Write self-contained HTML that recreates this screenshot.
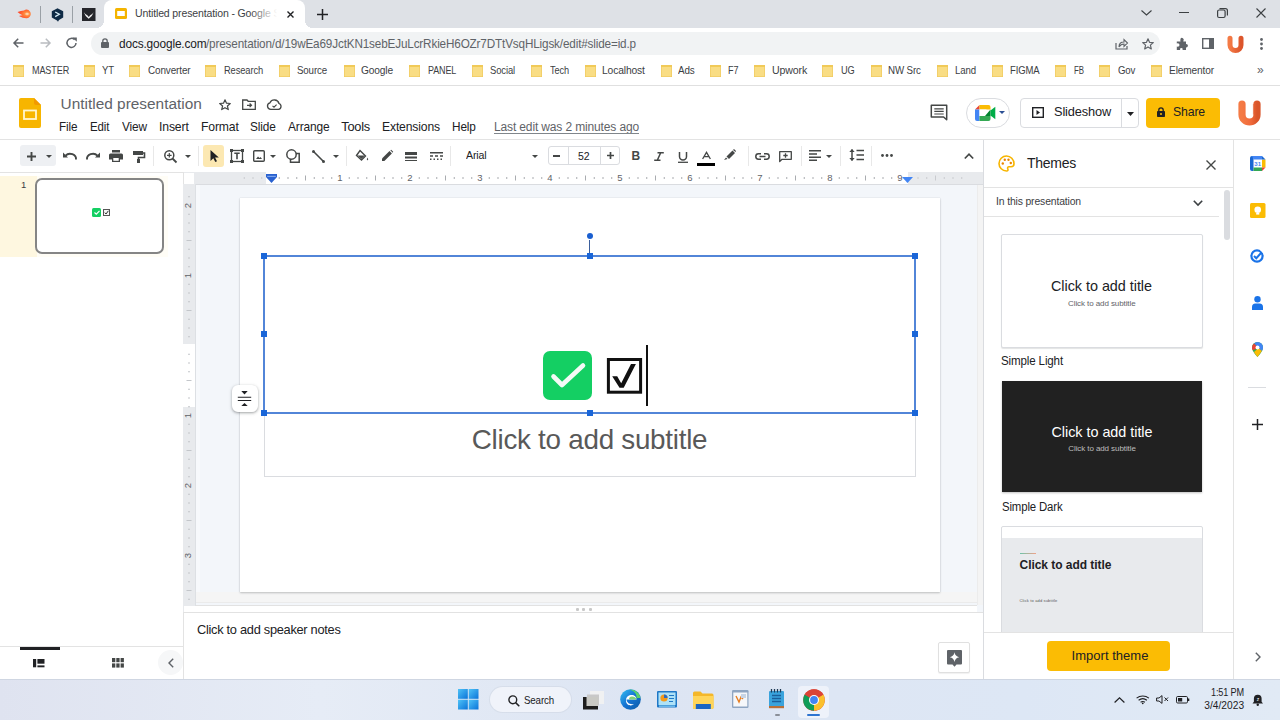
<!DOCTYPE html>
<html><head><meta charset="utf-8"><title>Google Slides</title>
<style>
*{box-sizing:border-box;margin:0;padding:0}
html,body{width:1280px;height:720px;overflow:hidden;background:#fff;font-family:"Liberation Sans",sans-serif;color:#202124;position:relative}
.a{position:absolute}
.t{white-space:pre}
svg{display:block;overflow:visible}
</style></head><body>
<div class="a" style="left:0px;top:0px;width:1280px;height:28px;background:#dee1e6"></div>
<svg class="a" style="left:16.5px;top:8.5px;" width="14" height="9.5" viewBox="0 0 14 9.5"><defs><radialGradient id="sr" cx="0.72" cy="0.5" r="0.6"><stop offset="0" stop-color="#fff3d6"/><stop offset="0.35" stop-color="#ff8a3d"/><stop offset="1" stop-color="#ff4a2a"/></radialGradient></defs><path d="M0.5 3 Q4 1.5 7 1.5 Q9 0 11.5 1 Q14 2.8 13.8 5 Q13.5 8.5 10 9.3 Q6 9.5 2 7 Q4 6.5 5.5 6.3 Q2.5 5 0.5 3 Z" fill="url(#sr)"/></svg>
<div class="a" style="left:39.5px;top:6px;width:1px;height:17px;background:#9aa0a6"></div>
<svg class="a" style="left:50.5px;top:7.5px;" width="13" height="14" viewBox="0 0 13 14"><path d="M6.5 0.3 L12.2 3.3 V9.5 L8 12 L7 13.7 L6 12.5 L0.8 9.5 V3.3 Z" fill="#0f2b46"/><path d="M4.2 4 L8.3 6.3 L4.2 8.6" stroke="#d8eef8" stroke-width="1.3" fill="none"/></svg>
<div class="a" style="left:72px;top:6px;width:1px;height:17px;background:#9aa0a6"></div>
<svg class="a" style="left:82px;top:7.8px;" width="13.5" height="13" viewBox="0 0 13.5 13"><rect width="13.5" height="13" fill="#25262b"/><path d="M1.8 4.2 Q3 8 6.7 10.8 Q10.5 8 11.7 4.2 Q9.8 6.8 8.2 7.2 L6.75 9 L5.3 7.2 Q3.7 6.8 1.8 4.2 Z" fill="#f2f2f2"/></svg>
<div class="a" style="left:104px;top:0;width:201px;height:28px;background:#fff;border-radius:8px 8px 0 0"></div>
<div class="a" style="left:96px;top:20px;width:8px;height:8px;background:radial-gradient(circle at 0 0,#dee1e6 8px,#fff 8px)"></div>
<div class="a" style="left:305px;top:20px;width:8px;height:8px;background:radial-gradient(circle at 8px 0,#dee1e6 8px,#fff 8px)"></div>
<svg class="a" style="left:114px;top:7px;" width="14" height="13" viewBox="0 0 14 13"><rect x="1" y="1" width="12" height="11" rx="1.5" fill="#f4b400"/><rect x="3.2" y="4" width="7.6" height="5" fill="#fff"/></svg>
<div class="a t" style="left:134.70px;top:8.15px;font-size:11.4px;line-height:11.4px;color:#3c4043;font-weight:400;letter-spacing:-0.150px;font-family:'Liberation Sans',sans-serif;transform:scaleX(0.9237);transform-origin:0 0;">Untitled presentation - Google S</div>
<div class="a" style="left:250px;top:5px;width:32px;height:18px;background:linear-gradient(90deg,rgba(255,255,255,0),#fff 85%)"></div>
<svg class="a" style="left:287px;top:11px;" width="7" height="7" viewBox="0 0 7 7"><path d="M0.5 0.5 L6.5 6.5 M6.5 0.5 L0.5 6.5" stroke="#202124" stroke-width="1.4"/></svg>
<svg class="a" style="left:317px;top:9px;" width="11" height="11" viewBox="0 0 11 11"><path d="M5.5 0 V11 M0 5.5 H11" stroke="#202124" stroke-width="1.5"/></svg>
<svg class="a" style="left:1141px;top:10px;" width="11" height="6" viewBox="0 0 11 6"><path d="M0.5 0.5 L5.5 5 L10.5 0.5" stroke="#3c4043" stroke-width="1.1" fill="none"/></svg>
<div class="a" style="left:1179px;top:12px;width:10px;height:1px;background:#3c4043"></div>
<svg class="a" style="left:1217px;top:8px;" width="11" height="10" viewBox="0 0 11 10"><rect x="0.6" y="2" width="7.5" height="7.5" rx="1.5" stroke="#3c4043" stroke-width="1.2" fill="none"/><path d="M2.5 0.6 H8.5 Q10.4 0.6 10.4 2.5 V7.5" stroke="#3c4043" stroke-width="1.2" fill="none"/></svg>
<svg class="a" style="left:1256px;top:8px;" width="10" height="10" viewBox="0 0 10 10"><path d="M0.5 0.5 L9.5 9.5 M9.5 0.5 L0.5 9.5" stroke="#3c4043" stroke-width="1.1"/></svg>
<div class="a" style="left:0px;top:28px;width:1280px;height:29px;background:#fff"></div>
<svg class="a" style="left:13px;top:38px;" width="11" height="10" viewBox="0 0 11 10"><path d="M10.5 5 H1.2 M5.2 0.8 L1 5 L5.2 9.2" stroke="#5f6368" stroke-width="1.5" fill="none"/></svg>
<svg class="a" style="left:40px;top:38px;" width="11" height="10" viewBox="0 0 11 10"><path d="M0.5 5 H9.8 M5.8 0.8 L10 5 L5.8 9.2" stroke="#b9bcc0" stroke-width="1.5" fill="none"/></svg>
<svg class="a" style="left:66px;top:37px;" width="12" height="12" viewBox="0 0 12 12"><path d="M10 6 A4.5 4.5 0 1 1 8.6 2.6" stroke="#5f6368" stroke-width="1.5" fill="none"/><path d="M6.5 0.5 H10.8 V4.8 Z" fill="#5f6368"/></svg>
<div class="a" style="left:91px;top:32px;width:1069px;height:23px;background:#f1f3f4;border-radius:12px"></div>
<svg class="a" style="left:101px;top:38px;" width="8" height="10" viewBox="0 0 8 10"><rect x="0" y="4" width="8" height="6" rx="1" fill="#5f6368"/><path d="M1.8 4.5 V3 A2.2 2.2 0 0 1 6.2 3 V4.5" stroke="#5f6368" stroke-width="1.3" fill="none"/></svg>
<div class="a t" style="left:118.75px;top:37.97px;font-size:12.2px;line-height:12.2px;color:#202124;font-weight:400;letter-spacing:-0.150px;font-family:'Liberation Sans',sans-serif;transform:scaleX(0.9734);transform-origin:0 0;">docs.google.com</div>
<div class="a t" style="left:206.30px;top:37.97px;font-size:12.2px;line-height:12.2px;color:#5f6368;font-weight:400;letter-spacing:-0.150px;font-family:'Liberation Sans',sans-serif;transform:scaleX(0.9607);transform-origin:0 0;">/presentation/d/19wEa69JctKN1sebEJuLcrRkieH6OZr7DTtVsqHLigsk/edit#slide=id.p</div>
<svg class="a" style="left:1115px;top:38px;" width="13" height="12" viewBox="0 0 13 12"><path d="M1 5 V11 H12 V8" stroke="#5f6368" stroke-width="1.2" fill="none"/><path d="M4 9 Q4 4 9 4 V1.5 L12.5 5 L9 8.5 V6 Q6 6 4 9" stroke="#5f6368" stroke-width="1.1" fill="none"/></svg>
<svg class="a" style="left:1142px;top:38px;" width="12" height="12" viewBox="0 0 12 12"><path d="M6 0.8 L7.5 4.3 L11.3 4.6 L8.4 7.1 L9.3 10.9 L6 8.9 L2.7 10.9 L3.6 7.1 L0.7 4.6 L4.5 4.3 Z" stroke="#5f6368" stroke-width="1.2" fill="none" stroke-linejoin="round"/></svg>
<svg class="a" style="left:1176px;top:38px;" width="12" height="12" viewBox="0 0 12 12"><path d="M4.5 0.8 A1.5 1.5 0 0 1 7.5 2.5 L7.3 3.5 H10 V6 L11 6.3 A1.6 1.6 0 0 1 11 9.2 L10 9.5 V12 H6.5 L6.7 10.8 A1.5 1.5 0 0 0 4 10.8 L4.2 12 H0.8 V8.5 L1.8 8.7 A1.6 1.6 0 0 0 1.8 5.3 L0.8 5.5 V3.5 H4.5 L4.3 2.5 Z" fill="#5f6368"/></svg>
<svg class="a" style="left:1202px;top:38px;" width="12" height="11" viewBox="0 0 12 11"><rect x="0.7" y="0.7" width="10.6" height="9.6" stroke="#5f6368" stroke-width="1.4" fill="none"/><rect x="7" y="0.7" width="4.3" height="9.6" fill="#5f6368"/></svg>
<svg class="a" style="left:1227px;top:34.5px;" width="17" height="18.5" viewBox="0 0 17 18.5"><defs><linearGradient id="ug2" x1="0" y1="0" x2="1" y2="0"><stop offset="0" stop-color="#f47a45"/><stop offset="1" stop-color="#dc552b"/></linearGradient></defs><path d="M3 3.2 V10 A5.5 5.5 0 0 0 14 10 V3.2" stroke="url(#ug2)" stroke-width="5" fill="none" stroke-linecap="round"/></svg>
<svg class="a" style="left:1260px;top:38px;" width="3" height="12" viewBox="0 0 3 12"><circle cx="1.5" cy="1.5" r="1.4" fill="#5f6368"/><circle cx="1.5" cy="6" r="1.4" fill="#5f6368"/><circle cx="1.5" cy="10.5" r="1.4" fill="#5f6368"/></svg>
<div class="a" style="left:0px;top:57px;width:1280px;height:28px;background:#fff"></div>
<div class="a" style="left:0px;top:85px;width:1280px;height:1px;background:#e0e0e0"></div>
<svg class="a" style="left:13px;top:64.5px;" width="11" height="12" viewBox="0 0 11 12"><rect x="0" y="0" width="11" height="12" fill="#f9dd84"/><rect x="0" y="0" width="11" height="2" fill="#f2cb57"/><rect x="0.3" y="0.3" width="10.4" height="11.4" fill="none" stroke="#efc95a" stroke-width="0.6"/></svg>
<div class="a t" style="left:31.80px;top:64.95px;font-size:11.4px;line-height:11.4px;color:#3c4043;font-weight:400;letter-spacing:-0.150px;font-family:'Liberation Sans',sans-serif;transform:scaleX(0.7967);transform-origin:0 0;">MASTER</div>
<svg class="a" style="left:84px;top:64.5px;" width="11" height="12" viewBox="0 0 11 12"><rect x="0" y="0" width="11" height="12" fill="#f9dd84"/><rect x="0" y="0" width="11" height="2" fill="#f2cb57"/><rect x="0.3" y="0.3" width="10.4" height="11.4" fill="none" stroke="#efc95a" stroke-width="0.6"/></svg>
<div class="a t" style="left:102.00px;top:64.95px;font-size:11.4px;line-height:11.4px;color:#3c4043;font-weight:400;letter-spacing:-0.150px;font-family:'Liberation Sans',sans-serif;transform:scaleX(0.8414);transform-origin:0 0;">YT</div>
<svg class="a" style="left:129px;top:64.5px;" width="11" height="12" viewBox="0 0 11 12"><rect x="0" y="0" width="11" height="12" fill="#f9dd84"/><rect x="0" y="0" width="11" height="2" fill="#f2cb57"/><rect x="0.3" y="0.3" width="10.4" height="11.4" fill="none" stroke="#efc95a" stroke-width="0.6"/></svg>
<div class="a t" style="left:147.50px;top:64.95px;font-size:11.4px;line-height:11.4px;color:#3c4043;font-weight:400;letter-spacing:-0.150px;font-family:'Liberation Sans',sans-serif;transform:scaleX(0.8733);transform-origin:0 0;">Converter</div>
<svg class="a" style="left:205px;top:64.5px;" width="11" height="12" viewBox="0 0 11 12"><rect x="0" y="0" width="11" height="12" fill="#f9dd84"/><rect x="0" y="0" width="11" height="2" fill="#f2cb57"/><rect x="0.3" y="0.3" width="10.4" height="11.4" fill="none" stroke="#efc95a" stroke-width="0.6"/></svg>
<div class="a t" style="left:224.00px;top:64.95px;font-size:11.4px;line-height:11.4px;color:#3c4043;font-weight:400;letter-spacing:-0.150px;font-family:'Liberation Sans',sans-serif;transform:scaleX(0.8202);transform-origin:0 0;">Research</div>
<svg class="a" style="left:279px;top:64.5px;" width="11" height="12" viewBox="0 0 11 12"><rect x="0" y="0" width="11" height="12" fill="#f9dd84"/><rect x="0" y="0" width="11" height="2" fill="#f2cb57"/><rect x="0.3" y="0.3" width="10.4" height="11.4" fill="none" stroke="#efc95a" stroke-width="0.6"/></svg>
<div class="a t" style="left:297.00px;top:64.95px;font-size:11.4px;line-height:11.4px;color:#3c4043;font-weight:400;letter-spacing:-0.150px;font-family:'Liberation Sans',sans-serif;transform:scaleX(0.8524);transform-origin:0 0;">Source</div>
<svg class="a" style="left:344px;top:64.5px;" width="11" height="12" viewBox="0 0 11 12"><rect x="0" y="0" width="11" height="12" fill="#f9dd84"/><rect x="0" y="0" width="11" height="2" fill="#f2cb57"/><rect x="0.3" y="0.3" width="10.4" height="11.4" fill="none" stroke="#efc95a" stroke-width="0.6"/></svg>
<div class="a t" style="left:361.00px;top:64.95px;font-size:11.4px;line-height:11.4px;color:#3c4043;font-weight:400;letter-spacing:-0.150px;font-family:'Liberation Sans',sans-serif;transform:scaleX(0.8930);transform-origin:0 0;">Google</div>
<svg class="a" style="left:409px;top:64.5px;" width="11" height="12" viewBox="0 0 11 12"><rect x="0" y="0" width="11" height="12" fill="#f9dd84"/><rect x="0" y="0" width="11" height="2" fill="#f2cb57"/><rect x="0.3" y="0.3" width="10.4" height="11.4" fill="none" stroke="#efc95a" stroke-width="0.6"/></svg>
<div class="a t" style="left:427.50px;top:64.95px;font-size:11.4px;line-height:11.4px;color:#3c4043;font-weight:400;letter-spacing:-0.150px;font-family:'Liberation Sans',sans-serif;transform:scaleX(0.7885);transform-origin:0 0;">PANEL</div>
<svg class="a" style="left:472px;top:64.5px;" width="11" height="12" viewBox="0 0 11 12"><rect x="0" y="0" width="11" height="12" fill="#f9dd84"/><rect x="0" y="0" width="11" height="2" fill="#f2cb57"/><rect x="0.3" y="0.3" width="10.4" height="11.4" fill="none" stroke="#efc95a" stroke-width="0.6"/></svg>
<div class="a t" style="left:490.00px;top:64.95px;font-size:11.4px;line-height:11.4px;color:#3c4043;font-weight:400;letter-spacing:-0.150px;font-family:'Liberation Sans',sans-serif;transform:scaleX(0.8297);transform-origin:0 0;">Social</div>
<svg class="a" style="left:531px;top:64.5px;" width="11" height="12" viewBox="0 0 11 12"><rect x="0" y="0" width="11" height="12" fill="#f9dd84"/><rect x="0" y="0" width="11" height="2" fill="#f2cb57"/><rect x="0.3" y="0.3" width="10.4" height="11.4" fill="none" stroke="#efc95a" stroke-width="0.6"/></svg>
<div class="a t" style="left:549.50px;top:64.95px;font-size:11.4px;line-height:11.4px;color:#3c4043;font-weight:400;letter-spacing:-0.150px;font-family:'Liberation Sans',sans-serif;transform:scaleX(0.8055);transform-origin:0 0;">Tech</div>
<svg class="a" style="left:585px;top:64.5px;" width="11" height="12" viewBox="0 0 11 12"><rect x="0" y="0" width="11" height="12" fill="#f9dd84"/><rect x="0" y="0" width="11" height="2" fill="#f2cb57"/><rect x="0.3" y="0.3" width="10.4" height="11.4" fill="none" stroke="#efc95a" stroke-width="0.6"/></svg>
<div class="a t" style="left:602.00px;top:64.95px;font-size:11.4px;line-height:11.4px;color:#3c4043;font-weight:400;letter-spacing:-0.150px;font-family:'Liberation Sans',sans-serif;transform:scaleX(0.9027);transform-origin:0 0;">Localhost</div>
<svg class="a" style="left:661px;top:64.5px;" width="11" height="12" viewBox="0 0 11 12"><rect x="0" y="0" width="11" height="12" fill="#f9dd84"/><rect x="0" y="0" width="11" height="2" fill="#f2cb57"/><rect x="0.3" y="0.3" width="10.4" height="11.4" fill="none" stroke="#efc95a" stroke-width="0.6"/></svg>
<div class="a t" style="left:678.40px;top:64.95px;font-size:11.4px;line-height:11.4px;color:#3c4043;font-weight:400;letter-spacing:-0.150px;font-family:'Liberation Sans',sans-serif;transform:scaleX(0.8650);transform-origin:0 0;">Ads</div>
<svg class="a" style="left:710px;top:64.5px;" width="11" height="12" viewBox="0 0 11 12"><rect x="0" y="0" width="11" height="12" fill="#f9dd84"/><rect x="0" y="0" width="11" height="2" fill="#f2cb57"/><rect x="0.3" y="0.3" width="10.4" height="11.4" fill="none" stroke="#efc95a" stroke-width="0.6"/></svg>
<div class="a t" style="left:728.30px;top:64.95px;font-size:11.4px;line-height:11.4px;color:#3c4043;font-weight:400;letter-spacing:-0.150px;font-family:'Liberation Sans',sans-serif;transform:scaleX(0.7925);transform-origin:0 0;">F7</div>
<svg class="a" style="left:754px;top:64.5px;" width="11" height="12" viewBox="0 0 11 12"><rect x="0" y="0" width="11" height="12" fill="#f9dd84"/><rect x="0" y="0" width="11" height="2" fill="#f2cb57"/><rect x="0.3" y="0.3" width="10.4" height="11.4" fill="none" stroke="#efc95a" stroke-width="0.6"/></svg>
<div class="a t" style="left:772.30px;top:64.95px;font-size:11.4px;line-height:11.4px;color:#3c4043;font-weight:400;letter-spacing:-0.150px;font-family:'Liberation Sans',sans-serif;transform:scaleX(0.9304);transform-origin:0 0;">Upwork</div>
<svg class="a" style="left:822px;top:64.5px;" width="11" height="12" viewBox="0 0 11 12"><rect x="0" y="0" width="11" height="12" fill="#f9dd84"/><rect x="0" y="0" width="11" height="2" fill="#f2cb57"/><rect x="0.3" y="0.3" width="10.4" height="11.4" fill="none" stroke="#efc95a" stroke-width="0.6"/></svg>
<div class="a t" style="left:841.20px;top:64.95px;font-size:11.4px;line-height:11.4px;color:#3c4043;font-weight:400;letter-spacing:-0.150px;font-family:'Liberation Sans',sans-serif;transform:scaleX(0.8098);transform-origin:0 0;">UG</div>
<svg class="a" style="left:871px;top:64.5px;" width="11" height="12" viewBox="0 0 11 12"><rect x="0" y="0" width="11" height="12" fill="#f9dd84"/><rect x="0" y="0" width="11" height="2" fill="#f2cb57"/><rect x="0.3" y="0.3" width="10.4" height="11.4" fill="none" stroke="#efc95a" stroke-width="0.6"/></svg>
<div class="a t" style="left:888.20px;top:64.95px;font-size:11.4px;line-height:11.4px;color:#3c4043;font-weight:400;letter-spacing:-0.150px;font-family:'Liberation Sans',sans-serif;transform:scaleX(0.8556);transform-origin:0 0;">NW Src</div>
<svg class="a" style="left:937px;top:64.5px;" width="11" height="12" viewBox="0 0 11 12"><rect x="0" y="0" width="11" height="12" fill="#f9dd84"/><rect x="0" y="0" width="11" height="2" fill="#f2cb57"/><rect x="0.3" y="0.3" width="10.4" height="11.4" fill="none" stroke="#efc95a" stroke-width="0.6"/></svg>
<div class="a t" style="left:955.00px;top:64.95px;font-size:11.4px;line-height:11.4px;color:#3c4043;font-weight:400;letter-spacing:-0.150px;font-family:'Liberation Sans',sans-serif;transform:scaleX(0.8487);transform-origin:0 0;">Land</div>
<svg class="a" style="left:992px;top:64.5px;" width="11" height="12" viewBox="0 0 11 12"><rect x="0" y="0" width="11" height="12" fill="#f9dd84"/><rect x="0" y="0" width="11" height="2" fill="#f2cb57"/><rect x="0.3" y="0.3" width="10.4" height="11.4" fill="none" stroke="#efc95a" stroke-width="0.6"/></svg>
<div class="a t" style="left:1010.00px;top:64.95px;font-size:11.4px;line-height:11.4px;color:#3c4043;font-weight:400;letter-spacing:-0.150px;font-family:'Liberation Sans',sans-serif;transform:scaleX(0.8350);transform-origin:0 0;">FIGMA</div>
<svg class="a" style="left:1055px;top:64.5px;" width="11" height="12" viewBox="0 0 11 12"><rect x="0" y="0" width="11" height="12" fill="#f9dd84"/><rect x="0" y="0" width="11" height="2" fill="#f2cb57"/><rect x="0.3" y="0.3" width="10.4" height="11.4" fill="none" stroke="#efc95a" stroke-width="0.6"/></svg>
<div class="a t" style="left:1073.70px;top:64.95px;font-size:11.4px;line-height:11.4px;color:#3c4043;font-weight:400;letter-spacing:-0.150px;font-family:'Liberation Sans',sans-serif;transform:scaleX(0.6941);transform-origin:0 0;">FB</div>
<svg class="a" style="left:1099px;top:64.5px;" width="11" height="12" viewBox="0 0 11 12"><rect x="0" y="0" width="11" height="12" fill="#f9dd84"/><rect x="0" y="0" width="11" height="2" fill="#f2cb57"/><rect x="0.3" y="0.3" width="10.4" height="11.4" fill="none" stroke="#efc95a" stroke-width="0.6"/></svg>
<div class="a t" style="left:1117.70px;top:64.95px;font-size:11.4px;line-height:11.4px;color:#3c4043;font-weight:400;letter-spacing:-0.150px;font-family:'Liberation Sans',sans-serif;transform:scaleX(0.8464);transform-origin:0 0;">Gov</div>
<svg class="a" style="left:1151px;top:64.5px;" width="11" height="12" viewBox="0 0 11 12"><rect x="0" y="0" width="11" height="12" fill="#f9dd84"/><rect x="0" y="0" width="11" height="2" fill="#f2cb57"/><rect x="0.3" y="0.3" width="10.4" height="11.4" fill="none" stroke="#efc95a" stroke-width="0.6"/></svg>
<div class="a t" style="left:1169.00px;top:64.95px;font-size:11.4px;line-height:11.4px;color:#3c4043;font-weight:400;letter-spacing:-0.150px;font-family:'Liberation Sans',sans-serif;transform:scaleX(0.8898);transform-origin:0 0;">Elementor</div>
<div class="a t" style="left:1257.00px;top:64.34px;font-size:12px;line-height:12px;color:#5f6368;font-weight:400;letter-spacing:0.000px;font-family:'Liberation Sans',sans-serif;">»</div>
<div class="a" style="left:0px;top:86px;width:1280px;height:53px;background:#fff"></div>
<svg class="a" style="left:19px;top:98px;" width="22" height="30" viewBox="0 0 22 30"><path d="M2 0 H15 L22 7 V28 A2 2 0 0 1 20 30 H2 A2 2 0 0 1 0 28 V2 A2 2 0 0 1 2 0 Z" fill="#f7b500"/><path d="M15 0 L22 7 H17 A2 2 0 0 1 15 5 Z" fill="#f29900"/><rect x="5" y="12.5" width="12" height="8.5" fill="none" stroke="#fff6d0" stroke-width="1.8"/></svg>
<div class="a t" style="left:60.50px;top:96.46px;font-size:15.4px;line-height:15.4px;color:#5f6368;font-weight:400;letter-spacing:0.011px;font-family:'Liberation Sans',sans-serif;">Untitled presentation</div>
<svg class="a" style="left:219px;top:99px;" width="12" height="11" viewBox="0 0 12 11"><path d="M6 0.8 L7.5 4.2 L11.3 4.5 L8.4 7 L9.3 10.6 L6 8.7 L2.7 10.6 L3.6 7 L0.7 4.5 L4.5 4.2 Z" stroke="#444746" stroke-width="1.2" fill="none" stroke-linejoin="round"/></svg>
<svg class="a" style="left:242px;top:99px;" width="14" height="11" viewBox="0 0 14 11"><path d="M0.7 1 H5 L6.2 2.3 H13.3 V10.3 H0.7 Z" stroke="#444746" stroke-width="1.3" fill="none"/><path d="M5 6.3 H9.5 M7.6 4.5 L9.5 6.3 L7.6 8.1" stroke="#444746" stroke-width="1.2" fill="none"/></svg>
<svg class="a" style="left:267px;top:99px;" width="15" height="11" viewBox="0 0 15 11"><path d="M3.8 10.3 H11.5 A3 3 0 0 0 12 4.5 A4.8 4.8 0 0 0 3 3.8 A3.3 3.3 0 0 0 3.8 10.3 Z" stroke="#444746" stroke-width="1.3" fill="none"/><path d="M5.5 6.8 L7 8.2 L9.6 5.6" stroke="#444746" stroke-width="1.1" fill="none"/></svg>
<div class="a t" style="left:59.40px;top:121.16px;font-size:12.8px;line-height:12.8px;color:#202124;font-weight:400;letter-spacing:-0.150px;font-family:'Liberation Sans',sans-serif;transform:scaleX(0.9139);transform-origin:0 0;">File</div>
<div class="a t" style="left:89.80px;top:121.16px;font-size:12.8px;line-height:12.8px;color:#202124;font-weight:400;letter-spacing:-0.150px;font-family:'Liberation Sans',sans-serif;transform:scaleX(0.8946);transform-origin:0 0;">Edit</div>
<div class="a t" style="left:121.50px;top:121.16px;font-size:12.8px;line-height:12.8px;color:#202124;font-weight:400;letter-spacing:-0.150px;font-family:'Liberation Sans',sans-serif;transform:scaleX(0.9288);transform-origin:0 0;">View</div>
<div class="a t" style="left:159.00px;top:121.16px;font-size:12.8px;line-height:12.8px;color:#202124;font-weight:400;letter-spacing:-0.150px;font-family:'Liberation Sans',sans-serif;transform:scaleX(0.9545);transform-origin:0 0;">Insert</div>
<div class="a t" style="left:201.00px;top:121.16px;font-size:12.8px;line-height:12.8px;color:#202124;font-weight:400;letter-spacing:-0.150px;font-family:'Liberation Sans',sans-serif;transform:scaleX(0.9513);transform-origin:0 0;">Format</div>
<div class="a t" style="left:250.40px;top:121.16px;font-size:12.8px;line-height:12.8px;color:#202124;font-weight:400;letter-spacing:-0.150px;font-family:'Liberation Sans',sans-serif;transform:scaleX(0.9236);transform-origin:0 0;">Slide</div>
<div class="a t" style="left:287.90px;top:121.16px;font-size:12.8px;line-height:12.8px;color:#202124;font-weight:400;letter-spacing:-0.150px;font-family:'Liberation Sans',sans-serif;transform:scaleX(0.9330);transform-origin:0 0;">Arrange</div>
<div class="a t" style="left:341.25px;top:121.16px;font-size:12.8px;line-height:12.8px;color:#202124;font-weight:400;letter-spacing:-0.225px;font-family:'Liberation Sans',sans-serif;">Tools</div>
<div class="a t" style="left:382.00px;top:121.16px;font-size:12.8px;line-height:12.8px;color:#202124;font-weight:400;letter-spacing:-0.150px;font-family:'Liberation Sans',sans-serif;transform:scaleX(0.9491);transform-origin:0 0;">Extensions</div>
<div class="a t" style="left:452.00px;top:121.16px;font-size:12.8px;line-height:12.8px;color:#202124;font-weight:400;letter-spacing:-0.150px;font-family:'Liberation Sans',sans-serif;transform:scaleX(0.9231);transform-origin:0 0;">Help</div>
<div class="a t" style="left:493.75px;top:121.42px;font-size:12.5px;line-height:12.5px;color:#5f6368;font-weight:400;letter-spacing:-0.150px;font-family:'Liberation Sans',sans-serif;transform:scaleX(0.9609);transform-origin:0 0;">Last edit was 2 minutes ago</div>
<div class="a" style="left:494px;top:132.5px;width:145px;height:1px;background:#80868b"></div>
<svg class="a" style="left:930px;top:103.5px;" width="18" height="17" viewBox="0 0 18 17"><path d="M1.3 1.3 H16.7 V15.8 L13.6 13 H1.3 Z" stroke="#444746" stroke-width="1.5" fill="none" stroke-linejoin="round"/><path d="M4.3 4.8 H13.7 M4.3 7.3 H13.7 M4.3 10 H13.7" stroke="#444746" stroke-width="1.2"/></svg>
<div class="a" style="left:966px;top:98px;width:44px;height:30px;border:1px solid #dadce0;border-radius:15px;background:#fff"></div>
<svg class="a" style="left:974.5px;top:104.5px;" width="21" height="16" viewBox="0 0 21 16"><path d="M0 4.5 L4.5 0 V4.5 Z" fill="#ea4335"/><path d="M4.5 0 H13.5 A2 2 0 0 1 15.5 2 V4.5 H4.5 Z" fill="#fbbc04"/><path d="M0 4.5 H4.5 V16 H2 A2 2 0 0 1 0 14 Z" fill="#4285f4"/><path d="M4.5 11 H15.5 V14 A2 2 0 0 1 13.5 16 H4.5 Z" fill="#34a853"/><path d="M4.5 4.5 H11.5 V11 H4.5 Z" fill="#fff"/><path d="M15.5 4.5 V11 H10 Z" fill="#00832d"/><path d="M15.5 5.5 L20.3 1.8 V14.2 L15.5 10.5 Z" fill="#00ac47"/></svg>
<svg class="a" style="left:999px;top:110.5px;" width="6" height="3" viewBox="0 0 6 3"><path d="M0 0 H6 L3 3 Z" fill="#2b4f94"/></svg>
<div class="a" style="left:1020px;top:98px;width:119px;height:30px;border:1px solid #dadce0;border-radius:4px;background:#fff"></div>
<div class="a" style="left:1121px;top:99px;width:1px;height:28px;background:#dadce0"></div>
<svg class="a" style="left:1032px;top:107px;" width="12" height="11" viewBox="0 0 12 11"><rect x="0.7" y="0.7" width="10.6" height="9.6" stroke="#202124" stroke-width="1.4" fill="none"/><path d="M4.5 3 L8 5.5 L4.5 8 Z" fill="#202124"/></svg>
<div class="a t" style="left:1054.30px;top:105.46px;font-size:13.4px;line-height:13.4px;color:#202124;font-weight:400;letter-spacing:-0.150px;font-family:'Liberation Sans',sans-serif;transform:scaleX(0.9548);transform-origin:0 0;">Slideshow</div>
<svg class="a" style="left:1127px;top:112px;" width="7" height="4" viewBox="0 0 7 4"><path d="M0 0 H7 L3.5 4 Z" fill="#202124"/></svg>
<div class="a" style="left:1146px;top:98px;width:74px;height:30px;border-radius:4px;background:#fbbc04"></div>
<svg class="a" style="left:1157px;top:107px;" width="8" height="10" viewBox="0 0 8 10"><rect x="0" y="4" width="8" height="6" rx="0.8" fill="#202124"/><path d="M1.8 4.5 V3 A2.2 2.2 0 0 1 6.2 3 V4.5" stroke="#202124" stroke-width="1.3" fill="none"/><circle cx="4" cy="7" r="1" fill="#fbbc04"/></svg>
<div class="a t" style="left:1173.00px;top:105.46px;font-size:13.4px;line-height:13.4px;color:#202124;font-weight:400;letter-spacing:-0.150px;font-family:'Liberation Sans',sans-serif;transform:scaleX(0.9147);transform-origin:0 0;">Share</div>
<svg class="a" style="left:1238px;top:99.5px;" width="23" height="26.5" viewBox="0 0 23 26.5"><defs><linearGradient id="ug" x1="0" y1="0" x2="1" y2="0"><stop offset="0" stop-color="#f47a45"/><stop offset="0.6" stop-color="#f0693a"/><stop offset="1" stop-color="#d9552a"/></linearGradient></defs><path d="M4 4 V14.5 A7.5 7.5 0 0 0 19 14.5 V4" stroke="url(#ug)" stroke-width="7.2" fill="none" stroke-linecap="round"/><path d="M15.4 4 V14.5" stroke="#e25b2c" stroke-width="1" opacity=".5"/></svg>
<div class="a" style="left:0px;top:139px;width:983px;height:1px;background:#e3e3e3"></div>
<div class="a" style="left:983px;top:139px;width:297px;height:1px;background:#e3e3e3"></div>
<div class="a" style="left:0px;top:140px;width:983px;height:32px;background:#fff"></div>
<div class="a" style="left:0px;top:172px;width:983px;height:1px;background:#e3e3e3"></div>
<div class="a" style="left:20px;top:145px;width:36px;height:21px;background:#eef0f3;border-radius:3px"></div>
<svg class="a" style="left:26.5px;top:151.5px;" width="9" height="9" viewBox="0 0 9 9"><path d="M4.5 0 V9 M0 4.5 H9" stroke="#444746" stroke-width="1.9"/></svg>
<svg class="a" style="left:46px;top:155px;" width="6" height="3" viewBox="0 0 6 3"><path d="M0 0 H6 L3 3 Z" fill="#444746"/></svg>
<svg class="a" style="left:62.5px;top:152px;" width="14" height="8" viewBox="0 0 14 8"><path d="M13 7.5 A6 5.2 0 0 0 2.5 3.6" stroke="#444746" stroke-width="1.9" fill="none"/><path d="M0 0.5 V5.5 H5 Z" fill="#444746"/></svg>
<svg class="a" style="left:85.5px;top:152px;" width="14" height="8" viewBox="0 0 14 8"><path d="M1 7.5 A6 5.2 0 0 1 11.5 3.6" stroke="#444746" stroke-width="1.9" fill="none"/><path d="M14 0.5 V5.5 H9 Z" fill="#444746"/></svg>
<svg class="a" style="left:109px;top:150px;" width="14" height="12" viewBox="0 0 14 12"><rect x="3" y="0" width="8" height="2.5" fill="#444746"/><path d="M1.5 3.5 H12.5 A1.5 1.5 0 0 1 14 5 V9.5 H11 V12 H3 V9.5 H0 V5 A1.5 1.5 0 0 1 1.5 3.5 Z" fill="#444746"/><rect x="4.3" y="8" width="5.4" height="2.8" fill="#fff"/></svg>
<svg class="a" style="left:133px;top:150.5px;" width="12" height="12" viewBox="0 0 12 12"><rect x="0" y="0" width="10" height="4" fill="#444746"/><path d="M10 2 H11.5 V6.5 H5.5 V11.5" stroke="#444746" stroke-width="1.6" fill="none"/><rect x="4" y="8" width="3" height="4" fill="#444746"/></svg>
<div class="a" style="left:153px;top:146px;width:1px;height:20px;background:#e8e8e8"></div>
<svg class="a" style="left:163.5px;top:150px;" width="13" height="13" viewBox="0 0 13 13"><circle cx="5.3" cy="5.3" r="4.5" stroke="#444746" stroke-width="1.5" fill="none"/><path d="M8.5 8.5 L12.5 12.5" stroke="#444746" stroke-width="1.8"/><path d="M5.3 3 V7.6 M3 5.3 H7.6" stroke="#444746" stroke-width="1.2"/></svg>
<svg class="a" style="left:184.5px;top:155px;" width="6" height="3" viewBox="0 0 6 3"><path d="M0 0 H6 L3 3 Z" fill="#444746"/></svg>
<div class="a" style="left:198px;top:146px;width:1px;height:20px;background:#e8e8e8"></div>
<div class="a" style="left:203px;top:145px;width:21px;height:22px;background:#fce8b2;border-radius:3px"></div>
<svg class="a" style="left:209.5px;top:150px;" width="9" height="12" viewBox="0 0 9 12"><path d="M0.5 0 V11 L3.3 8.3 L5.3 12 L7 11.2 L5.1 7.5 L8.8 7.5 Z" fill="#202124"/></svg>
<svg class="a" style="left:229.5px;top:149px;" width="14" height="14" viewBox="0 0 14 14"><rect x="1.5" y="1.5" width="11" height="11" stroke="#444746" stroke-width="1.3" fill="none"/><rect x="0" y="0" width="3" height="3" fill="#444746"/><rect x="11" y="0" width="3" height="3" fill="#444746"/><rect x="0" y="11" width="3" height="3" fill="#444746"/><rect x="11" y="11" width="3" height="3" fill="#444746"/><path d="M4.3 4.3 H9.7 M7 4.3 V10.3" stroke="#444746" stroke-width="1.6"/></svg>
<svg class="a" style="left:253px;top:150px;" width="12" height="12" viewBox="0 0 12 12"><rect x="0.7" y="0.7" width="10.6" height="10.6" rx="1" stroke="#444746" stroke-width="1.4" fill="none"/><path d="M3 9 L5 6.5 L6.5 8 L7.5 7 L9 9 Z" fill="#444746"/></svg>
<svg class="a" style="left:270px;top:155px;" width="6" height="3" viewBox="0 0 6 3"><path d="M0 0 H6 L3 3 Z" fill="#444746"/></svg>
<svg class="a" style="left:285.5px;top:149px;" width="14" height="14" viewBox="0 0 14 14"><circle cx="5.5" cy="5.5" r="4.7" stroke="#444746" stroke-width="1.5" fill="none"/><path d="M10 4.5 H13.2 V13.2 H4.5 V10" stroke="#444746" stroke-width="1.5" fill="none"/></svg>
<svg class="a" style="left:311.5px;top:150px;" width="13" height="13" viewBox="0 0 13 13"><path d="M1.5 1.5 L11.5 11.5" stroke="#444746" stroke-width="1.6"/><circle cx="1.5" cy="1.5" r="1.5" fill="#444746"/><circle cx="11.5" cy="11.5" r="1.5" fill="#444746"/></svg>
<svg class="a" style="left:333px;top:155px;" width="6" height="3" viewBox="0 0 6 3"><path d="M0 0 H6 L3 3 Z" fill="#444746"/></svg>
<div class="a" style="left:346px;top:146px;width:1px;height:20px;background:#e8e8e8"></div>
<svg class="a" style="left:355.5px;top:149.5px;" width="13" height="11" viewBox="0 0 13 11"><path d="M4 0.5 L9.5 6 L5.5 10 L0.5 5.5 Z" stroke="#444746" stroke-width="1.4" fill="none"/><path d="M1.5 5.5 H9 L5.5 9 Z" fill="#444746"/><path d="M11.5 7.5 Q13 9.5 11.5 10.5 Q10 9.5 11.5 7.5" fill="#444746"/></svg>
<svg class="a" style="left:381.5px;top:150px;" width="11" height="11" viewBox="0 0 11 11"><path d="M0 11 V8.6 L7.5 1.1 L9.9 3.5 L2.4 11 Z" fill="#444746"/><path d="M8.3 0.3 L9.2 -0.2 L11.2 1.8 L10.7 2.7 Z" fill="#444746"/></svg>
<svg class="a" style="left:405px;top:152px;" width="12" height="9" viewBox="0 0 12 9"><rect x="0" y="0" width="12" height="3" fill="#444746"/><rect x="0" y="4.5" width="12" height="2" fill="#444746"/><rect x="0" y="8" width="12" height="1" fill="#444746"/></svg>
<svg class="a" style="left:429.5px;top:152px;" width="13" height="8" viewBox="0 0 13 8"><rect x="0" y="0" width="13" height="1.5" fill="#444746"/><path d="M0 4 H3 M5 4 H8 M10 4 H13" stroke="#444746" stroke-width="1.5"/><path d="M0 7.3 H1.5 M3.5 7.3 H5 M7 7.3 H8.5 M10.5 7.3 H12" stroke="#444746" stroke-width="1.5"/></svg>
<div class="a" style="left:450px;top:146px;width:1px;height:20px;background:#e8e8e8"></div>
<div class="a t" style="left:465.80px;top:150.36px;font-size:10.8px;line-height:10.8px;color:#202124;font-weight:400;letter-spacing:-0.150px;font-family:'Liberation Sans',sans-serif;transform:scaleX(0.9828);transform-origin:0 0;">Arial</div>
<svg class="a" style="left:532px;top:155px;" width="6" height="3" viewBox="0 0 6 3"><path d="M0 0 H6 L3 3 Z" fill="#444746"/></svg>
<div class="a" style="left:548px;top:146px;width:72px;height:19px;border:1px solid #dadce0;border-radius:3px"></div>
<div class="a" style="left:567.5px;top:146px;width:1px;height:19px;background:#dadce0"></div>
<div class="a" style="left:600px;top:146px;width:1px;height:19px;background:#dadce0"></div>
<div class="a" style="left:553px;top:155px;width:7px;height:2px;background:#444746"></div>
<div class="a t" style="left:578.00px;top:151.31px;font-size:10.5px;line-height:10.5px;color:#202124;font-weight:400;letter-spacing:0.006px;font-family:'Liberation Sans',sans-serif;">52</div>
<svg class="a" style="left:607px;top:152px;" width="7" height="7" viewBox="0 0 7 7"><path d="M3.5 0 V7 M0 3.5 H7" stroke="#444746" stroke-width="1.7"/></svg>
<div class="a t" style="left:631.50px;top:150.24px;font-size:12px;line-height:12px;color:#444746;font-weight:700;letter-spacing:0.000px;font-family:'Liberation Sans',sans-serif;">B</div>
<svg class="a" style="left:654px;top:151.5px;" width="10" height="9" viewBox="0 0 10 9"><path d="M3.5 0.7 H9.8 M0.2 8.3 H6.5 M6.7 0.7 L3.3 8.3" stroke="#444746" stroke-width="1.5"/></svg>
<svg class="a" style="left:677.5px;top:151.5px;" width="10" height="11" viewBox="0 0 10 11"><path d="M1.5 0 V4.5 A3.5 3.5 0 0 0 8.5 4.5 V0" stroke="#444746" stroke-width="1.5" fill="none"/><path d="M0 10.3 H10" stroke="#444746" stroke-width="1.3"/></svg>
<svg class="a" style="left:701.5px;top:151.5px;" width="9" height="7" viewBox="0 0 9 7"><path d="M0.6 7 L4.5 0.3 L8.4 7 M2 4.6 H7" stroke="#444746" stroke-width="1.3" fill="none"/></svg>
<div class="a" style="left:697px;top:162.7px;width:18px;height:3px;background:#000"></div>
<svg class="a" style="left:724px;top:149px;" width="12" height="11" viewBox="0 0 12 11"><path d="M0 11 L2 8.5 L3.5 10 Z" fill="#444746"/><path d="M2.5 7.5 L8.5 1.5 L11 4 L5 10 Z" fill="#444746"/><path d="M9 1 L10 0 L12 2 L11.5 3" fill="#444746"/></svg>
<div class="a" style="left:747.5px;top:146px;width:1px;height:20px;background:#e8e8e8"></div>
<svg class="a" style="left:754.5px;top:152.5px;" width="15" height="7" viewBox="0 0 15 7"><path d="M6 0.8 H3.5 A2.7 2.7 0 0 0 3.5 6.2 H6 M9 0.8 H11.5 A2.7 2.7 0 0 1 11.5 6.2 H9 M4.5 3.5 H10.5" stroke="#444746" stroke-width="1.5" fill="none"/></svg>
<svg class="a" style="left:778.5px;top:150.5px;" width="13" height="11" viewBox="0 0 13 11"><path d="M0.7 0.7 H12.3 V8.3 H3 L0.7 10.5 Z" stroke="#444746" stroke-width="1.3" fill="none" stroke-linejoin="round"/><path d="M6.5 2.3 V6.7 M4.3 4.5 H8.7" stroke="#444746" stroke-width="1.3"/></svg>
<div class="a" style="left:800.5px;top:146px;width:1px;height:20px;background:#e8e8e8"></div>
<svg class="a" style="left:808.5px;top:150px;" width="12" height="11" viewBox="0 0 12 11"><path d="M0 0.8 H12 M0 4 H8 M0 7.2 H12 M0 10.3 H8" stroke="#444746" stroke-width="1.5"/></svg>
<svg class="a" style="left:826px;top:155px;" width="6" height="3" viewBox="0 0 6 3"><path d="M0 0 H6 L3 3 Z" fill="#444746"/></svg>
<div class="a" style="left:840px;top:146px;width:1px;height:20px;background:#e8e8e8"></div>
<svg class="a" style="left:848.5px;top:149px;" width="15" height="12" viewBox="0 0 15 12"><path d="M3 0.5 V11.5" stroke="#444746" stroke-width="1.5"/><path d="M0.3 3 L3 0 L5.7 3 Z M0.3 9 L3 12 L5.7 9 Z" fill="#444746"/><path d="M7.5 1.5 H15 M7.5 6 H15 M7.5 10.5 H15" stroke="#444746" stroke-width="1.5"/></svg>
<div class="a" style="left:871px;top:146px;width:1px;height:20px;background:#e8e8e8"></div>
<svg class="a" style="left:880.5px;top:154px;" width="12" height="3" viewBox="0 0 12 3"><circle cx="1.5" cy="1.5" r="1.4" fill="#444746"/><circle cx="6" cy="1.5" r="1.4" fill="#444746"/><circle cx="10.5" cy="1.5" r="1.4" fill="#444746"/></svg>
<svg class="a" style="left:963.5px;top:153px;" width="10" height="6" viewBox="0 0 10 6"><path d="M0.8 5.5 L5 1.2 L9.2 5.5" stroke="#444746" stroke-width="1.7" fill="none"/></svg>
<div class="a" style="left:0px;top:173px;width:183px;height:507px;background:#fff"></div>
<div class="a" style="left:183px;top:173px;width:1px;height:507px;background:#e3e3e3"></div>
<div class="a" style="left:0px;top:176px;width:37px;height:81px;background:#fef7e0"></div>
<div class="a" style="left:37px;top:176px;width:131px;height:81px;background:#fffdf6"></div>
<div class="a t" style="left:21.00px;top:180.16px;font-size:9.5px;line-height:9.5px;color:#3c4043;font-weight:400;letter-spacing:0.000px;font-family:'Liberation Sans',sans-serif;">1</div>
<div class="a" style="left:35px;top:178px;width:129px;height:76px;border:2px solid #858585;border-radius:7px;background:#fff"></div>
<div class="a" style="left:92px;top:208px;width:9px;height:9px;background:#14cf63;border-radius:1.5px"></div>
<svg class="a" style="left:93.5px;top:210px;" width="6" height="5" viewBox="0 0 6 5"><path d="M0.5 2.5 L2.3 4.2 L5.5 0.8" stroke="#fff" stroke-width="1.2" fill="none"/></svg>
<svg class="a" style="left:103px;top:209px;" width="7" height="7" viewBox="0 0 7 7"><rect x="0.5" y="0.5" width="6" height="6" stroke="#555" stroke-width="1" fill="#f6f6f6"/><path d="M1.8 3.6 L3 5 L5.4 1.8" stroke="#333" stroke-width="1" fill="none"/></svg>
<div class="a" style="left:0px;top:646px;width:183px;height:1px;background:#e3e3e3"></div>
<div class="a" style="left:20px;top:647px;width:40px;height:3px;background:#202124"></div>
<svg class="a" style="left:32.6px;top:658.7px;" width="11.5" height="8.3" viewBox="0 0 11.5 8.3"><rect x="0" y="0" width="3.2" height="8.3" fill="#202124"/><rect x="4.4" y="0" width="7.1" height="4.7" fill="#202124"/><rect x="4.4" y="6.4" width="7.1" height="1.9" fill="#202124"/></svg>
<svg class="a" style="left:112.3px;top:658.3px;" width="12" height="9.6" viewBox="0 0 12 9.6"><g fill="#444746"><rect x="0" y="0" width="3.3" height="4.2"/><rect x="4.3" y="0" width="3.3" height="4.2"/><rect x="8.6" y="0" width="3.3" height="4.2"/><rect x="0" y="5.4" width="3.3" height="4.2"/><rect x="4.3" y="5.4" width="3.3" height="4.2"/><rect x="8.6" y="5.4" width="3.3" height="4.2"/></g></svg>
<div class="a" style="left:158px;top:650px;width:25px;height:25px;background:#f6f7f8;border-radius:50%"></div>
<svg class="a" style="left:168px;top:657.5px;" width="6" height="9.5" viewBox="0 0 6 9.5"><path d="M5.2 0.7 L1 5 L5.2 9.3" stroke="#5f6368" stroke-width="1.4" fill="none"/></svg>
<div class="a" style="left:184px;top:173px;width:799px;height:439px;background:#f3f6fa"></div>
<div class="a" style="left:195px;top:184px;width:5px;height:408px;background:#f7f9fc"></div>
<div class="a" style="left:195px;top:592px;width:782px;height:10px;background:#f5f5f5"></div>
<div class="a" style="left:195px;top:602px;width:782px;height:1px;background:#ebebeb"></div>
<div class="a" style="left:195px;top:605px;width:782px;height:1px;background:#e2e2e2"></div>
<div class="a" style="left:977px;top:184px;width:6px;height:421px;background:#f4f4f4"></div>
<div class="a" style="left:977px;top:184px;width:1px;height:421px;background:#ececec"></div>
<div class="a" style="left:184px;top:172px;width:799px;height:12px;background:#e8eaed"></div>
<div class="a" style="left:184px;top:173px;width:10px;height:11px;background:#fff"></div>
<div class="a" style="left:266px;top:172px;width:642px;height:12px;background:#fff"></div>
<div class="a" style="left:184px;top:183.5px;width:799px;height:1px;background:#dadce0"></div>
<div class="a t" style="left:337.35px;top:173.26px;font-size:9.5px;line-height:9.5px;color:#5f6368;font-weight:400;letter-spacing:0.000px;font-family:'Liberation Sans',sans-serif;">1</div>
<div class="a t" style="left:407.35px;top:173.26px;font-size:9.5px;line-height:9.5px;color:#5f6368;font-weight:400;letter-spacing:0.000px;font-family:'Liberation Sans',sans-serif;">2</div>
<div class="a t" style="left:477.35px;top:173.26px;font-size:9.5px;line-height:9.5px;color:#5f6368;font-weight:400;letter-spacing:0.000px;font-family:'Liberation Sans',sans-serif;">3</div>
<div class="a t" style="left:547.35px;top:173.26px;font-size:9.5px;line-height:9.5px;color:#5f6368;font-weight:400;letter-spacing:0.000px;font-family:'Liberation Sans',sans-serif;">4</div>
<div class="a t" style="left:617.35px;top:173.26px;font-size:9.5px;line-height:9.5px;color:#5f6368;font-weight:400;letter-spacing:0.000px;font-family:'Liberation Sans',sans-serif;">5</div>
<div class="a t" style="left:687.35px;top:173.26px;font-size:9.5px;line-height:9.5px;color:#5f6368;font-weight:400;letter-spacing:0.000px;font-family:'Liberation Sans',sans-serif;">6</div>
<div class="a t" style="left:757.35px;top:173.26px;font-size:9.5px;line-height:9.5px;color:#5f6368;font-weight:400;letter-spacing:0.000px;font-family:'Liberation Sans',sans-serif;">7</div>
<div class="a t" style="left:827.35px;top:173.26px;font-size:9.5px;line-height:9.5px;color:#5f6368;font-weight:400;letter-spacing:0.000px;font-family:'Liberation Sans',sans-serif;">8</div>
<div class="a t" style="left:897.35px;top:173.26px;font-size:9.5px;line-height:9.5px;color:#5f6368;font-weight:400;letter-spacing:0.000px;font-family:'Liberation Sans',sans-serif;">9</div>
<svg class="a" style="left:196px;top:172px;" width="790" height="12" viewBox="0 0 790 12"><rect x="47.75" y="5.0" width="1" height="2" fill="#c9cbcf"/><rect x="56.50" y="5.0" width="1" height="2" fill="#c9cbcf"/><rect x="65.25" y="5.0" width="1" height="2" fill="#c9cbcf"/><rect x="82.75" y="5.0" width="1" height="2" fill="#a9acb0"/><rect x="91.50" y="5.0" width="1" height="2" fill="#a9acb0"/><rect x="100.25" y="5.0" width="1" height="2" fill="#a9acb0"/><rect x="109.00" y="3.5" width="1" height="5" fill="#a9acb0"/><rect x="117.75" y="5.0" width="1" height="2" fill="#a9acb0"/><rect x="126.50" y="5.0" width="1" height="2" fill="#a9acb0"/><rect x="135.25" y="5.0" width="1" height="2" fill="#a9acb0"/><rect x="152.75" y="5.0" width="1" height="2" fill="#a9acb0"/><rect x="161.50" y="5.0" width="1" height="2" fill="#a9acb0"/><rect x="170.25" y="5.0" width="1" height="2" fill="#a9acb0"/><rect x="179.00" y="3.5" width="1" height="5" fill="#a9acb0"/><rect x="187.75" y="5.0" width="1" height="2" fill="#a9acb0"/><rect x="196.50" y="5.0" width="1" height="2" fill="#a9acb0"/><rect x="205.25" y="5.0" width="1" height="2" fill="#a9acb0"/><rect x="222.75" y="5.0" width="1" height="2" fill="#a9acb0"/><rect x="231.50" y="5.0" width="1" height="2" fill="#a9acb0"/><rect x="240.25" y="5.0" width="1" height="2" fill="#a9acb0"/><rect x="249.00" y="3.5" width="1" height="5" fill="#a9acb0"/><rect x="257.75" y="5.0" width="1" height="2" fill="#a9acb0"/><rect x="266.50" y="5.0" width="1" height="2" fill="#a9acb0"/><rect x="275.25" y="5.0" width="1" height="2" fill="#a9acb0"/><rect x="292.75" y="5.0" width="1" height="2" fill="#a9acb0"/><rect x="301.50" y="5.0" width="1" height="2" fill="#a9acb0"/><rect x="310.25" y="5.0" width="1" height="2" fill="#a9acb0"/><rect x="319.00" y="3.5" width="1" height="5" fill="#a9acb0"/><rect x="327.75" y="5.0" width="1" height="2" fill="#a9acb0"/><rect x="336.50" y="5.0" width="1" height="2" fill="#a9acb0"/><rect x="345.25" y="5.0" width="1" height="2" fill="#a9acb0"/><rect x="362.75" y="5.0" width="1" height="2" fill="#a9acb0"/><rect x="371.50" y="5.0" width="1" height="2" fill="#a9acb0"/><rect x="380.25" y="5.0" width="1" height="2" fill="#a9acb0"/><rect x="389.00" y="3.5" width="1" height="5" fill="#a9acb0"/><rect x="397.75" y="5.0" width="1" height="2" fill="#a9acb0"/><rect x="406.50" y="5.0" width="1" height="2" fill="#a9acb0"/><rect x="415.25" y="5.0" width="1" height="2" fill="#a9acb0"/><rect x="432.75" y="5.0" width="1" height="2" fill="#a9acb0"/><rect x="441.50" y="5.0" width="1" height="2" fill="#a9acb0"/><rect x="450.25" y="5.0" width="1" height="2" fill="#a9acb0"/><rect x="459.00" y="3.5" width="1" height="5" fill="#a9acb0"/><rect x="467.75" y="5.0" width="1" height="2" fill="#a9acb0"/><rect x="476.50" y="5.0" width="1" height="2" fill="#a9acb0"/><rect x="485.25" y="5.0" width="1" height="2" fill="#a9acb0"/><rect x="502.75" y="5.0" width="1" height="2" fill="#a9acb0"/><rect x="511.50" y="5.0" width="1" height="2" fill="#a9acb0"/><rect x="520.25" y="5.0" width="1" height="2" fill="#a9acb0"/><rect x="529.00" y="3.5" width="1" height="5" fill="#a9acb0"/><rect x="537.75" y="5.0" width="1" height="2" fill="#a9acb0"/><rect x="546.50" y="5.0" width="1" height="2" fill="#a9acb0"/><rect x="555.25" y="5.0" width="1" height="2" fill="#a9acb0"/><rect x="572.75" y="5.0" width="1" height="2" fill="#a9acb0"/><rect x="581.50" y="5.0" width="1" height="2" fill="#a9acb0"/><rect x="590.25" y="5.0" width="1" height="2" fill="#a9acb0"/><rect x="599.00" y="3.5" width="1" height="5" fill="#a9acb0"/><rect x="607.75" y="5.0" width="1" height="2" fill="#a9acb0"/><rect x="616.50" y="5.0" width="1" height="2" fill="#a9acb0"/><rect x="625.25" y="5.0" width="1" height="2" fill="#a9acb0"/><rect x="642.75" y="5.0" width="1" height="2" fill="#a9acb0"/><rect x="651.50" y="5.0" width="1" height="2" fill="#a9acb0"/><rect x="660.25" y="5.0" width="1" height="2" fill="#a9acb0"/><rect x="669.00" y="3.5" width="1" height="5" fill="#a9acb0"/><rect x="677.75" y="5.0" width="1" height="2" fill="#a9acb0"/><rect x="686.50" y="5.0" width="1" height="2" fill="#a9acb0"/><rect x="695.25" y="5.0" width="1" height="2" fill="#a9acb0"/><rect x="712.75" y="5.0" width="1" height="2" fill="#c9cbcf"/><rect x="721.50" y="5.0" width="1" height="2" fill="#c9cbcf"/><rect x="730.25" y="5.0" width="1" height="2" fill="#c9cbcf"/><rect x="739.00" y="3.5" width="1" height="5" fill="#c9cbcf"/><rect x="747.75" y="5.0" width="1" height="2" fill="#c9cbcf"/><rect x="756.50" y="5.0" width="1" height="2" fill="#c9cbcf"/><rect x="765.25" y="5.0" width="1" height="2" fill="#c9cbcf"/></svg>
<svg class="a" style="left:265.5px;top:174px;" width="11" height="9" viewBox="0 0 11 9"><path d="M0 0 H11 V3 L5.5 9 L0 3 Z" fill="#2a62d0"/><rect x="1.2" y="1.8" width="8.6" height="1.2" fill="#7ea6ec"/></svg>
<svg class="a" style="left:902px;top:177px;" width="11" height="6" viewBox="0 0 11 6"><path d="M0 0 H11 L5.5 6 Z" fill="#4285f4"/></svg>
<div class="a" style="left:183px;top:184px;width:12px;height:428px;background:#e8eaed"></div>
<div class="a" style="left:183px;top:344px;width:12px;height:63px;background:#fff"></div>
<div class="a" style="left:195px;top:184px;width:1px;height:428px;background:#dde0e4"></div>
<div class="a t" style="left:186.35px;top:200.16px;font-size:9.5px;line-height:9.5px;color:#5f6368;font-weight:400;letter-spacing:0.000px;font-family:'Liberation Sans',sans-serif;transform:rotate(-90deg);transform-origin:50% 60%">2</div>
<div class="a t" style="left:186.35px;top:270.16px;font-size:9.5px;line-height:9.5px;color:#5f6368;font-weight:400;letter-spacing:0.000px;font-family:'Liberation Sans',sans-serif;transform:rotate(-90deg);transform-origin:50% 60%">1</div>
<div class="a t" style="left:186.35px;top:410.16px;font-size:9.5px;line-height:9.5px;color:#5f6368;font-weight:400;letter-spacing:0.000px;font-family:'Liberation Sans',sans-serif;transform:rotate(-90deg);transform-origin:50% 60%">1</div>
<div class="a t" style="left:186.35px;top:480.16px;font-size:9.5px;line-height:9.5px;color:#5f6368;font-weight:400;letter-spacing:0.000px;font-family:'Liberation Sans',sans-serif;transform:rotate(-90deg);transform-origin:50% 60%">2</div>
<div class="a t" style="left:186.35px;top:550.16px;font-size:9.5px;line-height:9.5px;color:#5f6368;font-weight:400;letter-spacing:0.000px;font-family:'Liberation Sans',sans-serif;transform:rotate(-90deg);transform-origin:50% 60%">3</div>
<svg class="a" style="left:183px;top:184px;" width="12" height="428" viewBox="0 0 12 428"><rect x="5.0" y="12.25" width="2" height="1" fill="#c3c6ca"/><rect x="5.0" y="29.75" width="2" height="1" fill="#c3c6ca"/><rect x="5.0" y="38.50" width="2" height="1" fill="#c3c6ca"/><rect x="5.0" y="47.25" width="2" height="1" fill="#c3c6ca"/><rect x="3.5" y="56.00" width="5" height="1" fill="#c3c6ca"/><rect x="5.0" y="64.75" width="2" height="1" fill="#c3c6ca"/><rect x="5.0" y="73.50" width="2" height="1" fill="#c3c6ca"/><rect x="5.0" y="82.25" width="2" height="1" fill="#c3c6ca"/><rect x="5.0" y="99.75" width="2" height="1" fill="#c3c6ca"/><rect x="5.0" y="108.50" width="2" height="1" fill="#c3c6ca"/><rect x="5.0" y="117.25" width="2" height="1" fill="#c3c6ca"/><rect x="3.5" y="126.00" width="5" height="1" fill="#c3c6ca"/><rect x="5.0" y="134.75" width="2" height="1" fill="#c3c6ca"/><rect x="5.0" y="143.50" width="2" height="1" fill="#c3c6ca"/><rect x="5.0" y="152.25" width="2" height="1" fill="#c3c6ca"/><rect x="5.0" y="169.75" width="2" height="1" fill="#c3c6ca"/><rect x="5.0" y="178.50" width="2" height="1" fill="#c3c6ca"/><rect x="5.0" y="187.25" width="2" height="1" fill="#c3c6ca"/><rect x="3.5" y="196.00" width="5" height="1" fill="#c3c6ca"/><rect x="5.0" y="204.75" width="2" height="1" fill="#c3c6ca"/><rect x="5.0" y="213.50" width="2" height="1" fill="#c3c6ca"/><rect x="5.0" y="222.25" width="2" height="1" fill="#c3c6ca"/><rect x="5.0" y="239.75" width="2" height="1" fill="#c3c6ca"/><rect x="5.0" y="248.50" width="2" height="1" fill="#c3c6ca"/><rect x="5.0" y="257.25" width="2" height="1" fill="#c3c6ca"/><rect x="3.5" y="266.00" width="5" height="1" fill="#c3c6ca"/><rect x="5.0" y="274.75" width="2" height="1" fill="#c3c6ca"/><rect x="5.0" y="283.50" width="2" height="1" fill="#c3c6ca"/><rect x="5.0" y="292.25" width="2" height="1" fill="#c3c6ca"/><rect x="5.0" y="309.75" width="2" height="1" fill="#c3c6ca"/><rect x="5.0" y="318.50" width="2" height="1" fill="#c3c6ca"/><rect x="5.0" y="327.25" width="2" height="1" fill="#c3c6ca"/><rect x="3.5" y="336.00" width="5" height="1" fill="#c3c6ca"/><rect x="5.0" y="344.75" width="2" height="1" fill="#c3c6ca"/><rect x="5.0" y="353.50" width="2" height="1" fill="#c3c6ca"/><rect x="5.0" y="362.25" width="2" height="1" fill="#c3c6ca"/><rect x="5.0" y="379.75" width="2" height="1" fill="#c3c6ca"/><rect x="5.0" y="388.50" width="2" height="1" fill="#c3c6ca"/><rect x="5.0" y="397.25" width="2" height="1" fill="#c3c6ca"/><rect x="3.5" y="406.00" width="5" height="1" fill="#c3c6ca"/><rect x="5.0" y="414.75" width="2" height="1" fill="#c3c6ca"/></svg>
<div class="a" style="left:240px;top:198px;width:700px;height:394px;background:#fff;box-shadow:0 1px 2px rgba(60,64,67,.28),0 0 1px rgba(60,64,67,.2)"></div>
<div class="a" style="left:263.5px;top:412px;width:652px;height:64.5px;border:1px solid #dadce0;border-top:none"></div>
<div class="a t" style="left:471.75px;top:425.67px;font-size:27.8px;line-height:27.8px;color:#595959;font-weight:400;letter-spacing:-0.263px;font-family:'Liberation Sans',sans-serif;">Click to add subtitle</div>
<div class="a" style="left:263px;top:255px;width:653px;height:159px;border:2px solid #5285d8"></div>
<div class="a" style="left:589px;top:240px;width:1.3px;height:14px;background:#3b5f9c"></div>
<div class="a" style="left:586.5px;top:233px;width:6px;height:6px;border-radius:50%;background:#1a5fd0"></div>
<div class="a" style="left:261px;top:253px;width:6px;height:6px;background:#1a66d8"></div>
<div class="a" style="left:261px;top:331px;width:6px;height:6px;background:#1a66d8"></div>
<div class="a" style="left:261px;top:410px;width:6px;height:6px;background:#1a66d8"></div>
<div class="a" style="left:586.5px;top:253px;width:6px;height:6px;background:#1a66d8"></div>
<div class="a" style="left:586.5px;top:410px;width:6px;height:6px;background:#1a66d8"></div>
<div class="a" style="left:912.3px;top:253px;width:6px;height:6px;background:#1a66d8"></div>
<div class="a" style="left:912.3px;top:331px;width:6px;height:6px;background:#1a66d8"></div>
<div class="a" style="left:912.3px;top:410px;width:6px;height:6px;background:#1a66d8"></div>
<div class="a" style="left:231.5px;top:385px;width:26px;height:27px;background:#fff;border-radius:6px;box-shadow:0 1px 2px rgba(60,64,67,.3),0 1px 3px 1px rgba(60,64,67,.15)"></div>
<svg class="a" style="left:237px;top:390px;" width="15" height="17" viewBox="0 0 15 17"><path d="M4.3 1 H10.7 L7.5 4.4 Z" fill="#202124"/><path d="M0.8 7.2 H14.2 M0.8 10.5 H14.2" stroke="#202124" stroke-width="1.1"/><path d="M4.3 15.9 H10.7 L7.5 13 Z" fill="#202124"/></svg>
<div class="a" style="left:543.2px;top:350.7px;width:49px;height:49.3px;background:#14cf63;border-radius:7px"></div>
<svg class="a" style="left:543px;top:350.5px;" width="50" height="50" viewBox="0 0 50 50"><path d="M10.5 25.5 L19 34 L40 14.5" stroke="#f4faf6" stroke-width="4.6" fill="none" stroke-linecap="round" stroke-linejoin="round"/></svg>
<svg class="a" style="left:606px;top:358px;" width="37" height="36" viewBox="0 0 37 36"><rect x="2.4" y="1.5" width="32.2" height="32.7" stroke="#111" stroke-width="3" fill="#fff"/><path d="M6.2 18.3 H11.2 L15.2 25.2 L25 6 H29.9 L17.7 29.8 H13.5 Z" fill="#111"/></svg>
<div class="a" style="left:646px;top:345px;width:1.5px;height:61px;background:#111"></div>
<div class="a" style="left:184px;top:612px;width:799px;height:1px;background:#e2e2e2"></div>
<div class="a" style="left:184px;top:613px;width:799px;height:67px;background:#fff"></div>
<div class="a" style="left:184px;top:606px;width:793px;height:6px;background:#fff"></div>
<div class="a" style="left:575.9px;top:608px;width:3px;height:3px;background:#c8c8c8;border-radius:1px"></div>
<div class="a" style="left:582.3px;top:608px;width:3px;height:3px;background:#c8c8c8;border-radius:1px"></div>
<div class="a" style="left:588.5px;top:608px;width:3px;height:3px;background:#c8c8c8;border-radius:1px"></div>
<div class="a t" style="left:197.00px;top:624.46px;font-size:12.8px;line-height:12.8px;color:#202124;font-weight:400;letter-spacing:-0.281px;font-family:'Liberation Sans',sans-serif;">Click to add speaker notes</div>
<div class="a" style="left:938px;top:642px;width:32px;height:31px;background:#fff;border:1px solid #e0e0e0;border-radius:2px;box-shadow:0 1px 1px rgba(0,0,0,.06)"></div>
<svg class="a" style="left:946.5px;top:650px;" width="15" height="17" viewBox="0 0 15 17"><path d="M1 0 H14 A1 1 0 0 1 15 1 V13.5 A1 1 0 0 1 14 14.5 H9.5 L7.5 16.7 L5.5 14.5 H1 A1 1 0 0 1 0 13.5 V1 A1 1 0 0 1 1 0 Z" fill="#5f6368"/><path d="M7.5 2.3 Q8.2 6.5 12.2 7.2 Q8.2 7.9 7.5 12.1 Q6.8 7.9 2.8 7.2 Q6.8 6.5 7.5 2.3 Z" fill="#fff"/></svg>
<div class="a" style="left:983px;top:140px;width:250px;height:540px;background:#fff"></div>
<div class="a" style="left:983px;top:140px;width:1px;height:540px;background:#dadce0"></div>
<svg class="a" style="left:998px;top:155px;" width="17" height="17" viewBox="0 0 17 17"><path d="M8.5 1 A7.5 7.5 0 0 0 8.5 16 C10 16 10.3 15 9.8 14 C9.3 13 9.6 11.8 11 11.8 H13 A3 3 0 0 0 16 8.8 C16 4.5 12.6 1 8.5 1 Z" stroke="#f7b500" stroke-width="1.6" fill="none"/><circle cx="4.8" cy="8.5" r="1.2" fill="#ea8600"/><circle cx="6.8" cy="4.8" r="1.2" fill="#ea8600"/><circle cx="10.5" cy="4.8" r="1.2" fill="#ea8600"/><circle cx="12.8" cy="8" r="1.2" fill="#ea8600"/></svg>
<div class="a t" style="left:1027.00px;top:155.75px;font-size:14px;line-height:14px;color:#202124;font-weight:400;letter-spacing:-0.263px;font-family:'Liberation Sans',sans-serif;">Themes</div>
<svg class="a" style="left:1205.5px;top:159.5px;" width="10" height="10" viewBox="0 0 10 10"><path d="M0.5 0.5 L9.5 9.5 M9.5 0.5 L0.5 9.5" stroke="#444746" stroke-width="1.4"/></svg>
<div class="a" style="left:984px;top:187px;width:249px;height:1px;background:#e3e3e3"></div>
<div class="a t" style="left:996.00px;top:195.69px;font-size:11px;line-height:11px;color:#3c4043;font-weight:400;letter-spacing:-0.150px;font-family:'Liberation Sans',sans-serif;transform:scaleX(0.9449);transform-origin:0 0;">In this presentation</div>
<svg class="a" style="left:1193px;top:200px;" width="10" height="6" viewBox="0 0 10 6"><path d="M0.8 0.8 L5 5 L9.2 0.8" stroke="#3c4043" stroke-width="1.6" fill="none"/></svg>
<div class="a" style="left:984px;top:216px;width:235px;height:1px;background:#e3e3e3"></div>
<div class="a" style="left:1223.5px;top:190px;width:6px;height:50px;background:#dadce0;border-radius:3px"></div>
<div class="a" style="left:1001px;top:233.5px;width:202px;height:114.5px;background:#fff;border:1px solid #dadce0;border-radius:2px;box-shadow:0 1px 1px rgba(60,64,67,.15)"></div>
<div class="a t" style="left:1051.00px;top:279.01px;font-size:14.4px;line-height:14.4px;color:#202124;font-weight:400;letter-spacing:-0.032px;font-family:'Liberation Sans',sans-serif;">Click to add title</div>
<div class="a t" style="left:1068.05px;top:300.03px;font-size:8px;line-height:8px;color:#5f6368;font-weight:400;letter-spacing:-0.089px;font-family:'Liberation Sans',sans-serif;">Click to add subtitle</div>
<div class="a t" style="left:1001.00px;top:354.82px;font-size:12.5px;line-height:12.5px;color:#202124;font-weight:400;letter-spacing:-0.150px;font-family:'Liberation Sans',sans-serif;transform:scaleX(0.9254);transform-origin:0 0;">Simple Light</div>
<div class="a" style="left:1001.5px;top:380.8px;width:200.5px;height:111px;background:#212121;box-shadow:0 1px 2px rgba(0,0,0,.25)"></div>
<div class="a t" style="left:1051.50px;top:424.81px;font-size:14.4px;line-height:14.4px;color:#ffffff;font-weight:400;letter-spacing:-0.032px;font-family:'Liberation Sans',sans-serif;">Click to add title</div>
<div class="a t" style="left:1068.25px;top:444.73px;font-size:8px;line-height:8px;color:#bdbdbd;font-weight:400;letter-spacing:-0.089px;font-family:'Liberation Sans',sans-serif;">Click to add subtitle</div>
<div class="a t" style="left:1001.50px;top:500.92px;font-size:12.5px;line-height:12.5px;color:#202124;font-weight:400;letter-spacing:-0.150px;font-family:'Liberation Sans',sans-serif;transform:scaleX(0.9108);transform-origin:0 0;">Simple Dark</div>
<div class="a" style="left:1001px;top:526px;width:202px;height:110px;background:#fff;border:1px solid #dadce0;border-radius:2px;overflow:hidden"><div style="position:absolute;left:0;top:11px;width:202px;height:110px;background:#e8eaed"></div></div>
<div class="a" style="left:1019.5px;top:552.5px;width:16.5px;height:1.3px;background:linear-gradient(90deg,#6cc3a8,#f2a28a)"></div>
<div class="a t" style="left:1019.50px;top:558.64px;font-size:12px;line-height:12px;color:#202124;font-weight:700;letter-spacing:-0.038px;font-family:'Liberation Sans',sans-serif;">Click to add title</div>
<div class="a t" style="left:1019.50px;top:599.11px;font-size:4px;line-height:4px;color:#555;font-weight:400;letter-spacing:0.158px;font-family:'Liberation Sans',sans-serif;">Click to add subtitle</div>
<div class="a" style="left:984px;top:632px;width:249px;height:48px;background:#fff"></div>
<div class="a" style="left:984px;top:631.5px;width:249px;height:1px;background:#e3e3e3"></div>
<div class="a" style="left:1047px;top:641px;width:123px;height:29.5px;background:#fbbc04;border-radius:4px"></div>
<div class="a t" style="left:1071.50px;top:649.00px;font-size:13px;line-height:13px;color:#202124;font-weight:400;letter-spacing:0.034px;font-family:'Liberation Sans',sans-serif;">Import theme</div>
<div class="a" style="left:1233px;top:140px;width:47px;height:540px;background:#fff"></div>
<div class="a" style="left:1233px;top:140px;width:1px;height:540px;background:#e3e3e3"></div>
<svg class="a" style="left:1249.5px;top:156.3px;" width="15.5" height="15" viewBox="0 0 15.5 15"><path d="M2 0 H12 L15.5 3.5 V12 L12 15 H2 A2 2 0 0 1 0 13 V2 A2 2 0 0 1 2 0 Z" fill="#fff"/><path d="M0 2 A2 2 0 0 1 2 0 H3.5 V15 H2 A2 2 0 0 1 0 13 Z" fill="#1967d2"/><path d="M2 0 H12 V3.5 H3.5 Z" fill="#4285f4"/><path d="M12 3.5 H15.5 V11.5 H12 Z" fill="#fbbc04"/><path d="M3.5 11.5 H12 V15 H3.5 Z" fill="#34a853"/><path d="M12 11.5 H15.5 L12 15 Z" fill="#ea4335"/><path d="M12 0 L15.5 3.5 H12 Z" fill="#1967d2"/><text x="7.7" y="10.3" font-size="6" font-family="Liberation Sans" font-weight="700" fill="#4285f4" text-anchor="middle">31</text></svg>
<svg class="a" style="left:1249.5px;top:202.5px;" width="15.5" height="15" viewBox="0 0 15.5 15"><rect x="0" y="0" width="15.5" height="15" rx="1.5" fill="#fbbc04"/><circle cx="7.75" cy="6.8" r="3.3" fill="#fff"/><rect x="6.2" y="10" width="3.1" height="1.6" fill="#fff"/></svg>
<svg class="a" style="left:1250px;top:249px;" width="14" height="14" viewBox="0 0 14 14"><circle cx="7" cy="7" r="5.6" stroke="#1a73e8" stroke-width="2.2" fill="none"/><path d="M4 7 L6.3 9.2 L11.5 3.5" stroke="#1a73e8" stroke-width="2" fill="none"/><path d="M9.5 0.5 L13.5 0.5 L13.5 4.5 Z" fill="#fff"/></svg>
<svg class="a" style="left:1251.5px;top:296px;" width="11" height="14" viewBox="0 0 11 14"><circle cx="5.5" cy="3.3" r="3.2" fill="#1a73e8"/><path d="M0 14 V11 A3.5 3.5 0 0 1 3.5 7.5 H7.5 A3.5 3.5 0 0 1 11 11 V14 Z" fill="#1a73e8"/></svg>
<svg class="a" style="left:1251.5px;top:342px;" width="11" height="15" viewBox="0 0 11 15"><path d="M5.5 0 A5.5 5.5 0 0 0 0 5.5 C0 9.5 5.5 15 5.5 15 C5.5 15 11 9.5 11 5.5 A5.5 5.5 0 0 0 5.5 0 Z" fill="#34a853"/><path d="M5.5 0 A5.5 5.5 0 0 1 11 5.5 C11 7 10.5 8 9.8 9 L2 1.5 A5.4 5.4 0 0 1 5.5 0 Z" fill="#4285f4"/><path d="M2 1.5 L6.5 6 L0.6 8.2 C0.2 7.3 0 6.4 0 5.5 A5.5 5.5 0 0 1 2 1.5 Z" fill="#ea4335"/><path d="M9.8 9 L6.5 6 L2 10 C3.5 12.5 5.5 15 5.5 15 Z" fill="#fbbc04"/><circle cx="5.5" cy="5.5" r="2" fill="#fff"/></svg>
<div class="a" style="left:1247.5px;top:386.5px;width:18px;height:1px;background:#dadce0"></div>
<svg class="a" style="left:1251.5px;top:419px;" width="11" height="11" viewBox="0 0 11 11"><path d="M5.5 0 V11 M0 5.5 H11" stroke="#202124" stroke-width="1.5"/></svg>
<svg class="a" style="left:1254.5px;top:652px;" width="6" height="10" viewBox="0 0 6 10"><path d="M0.8 0.7 L5 5 L0.8 9.3" stroke="#5f6368" stroke-width="1.4" fill="none"/></svg>
<div class="a" style="left:0;top:679px;width:1280px;height:41px;background:linear-gradient(90deg,#dfe3f0 0%,#e6ecf6 25%,#dde5f3 50%,#dde7f5 80%,#e1eaf5 100%);border-top:1px solid #cfd6e2"></div>
<svg class="a" style="left:457.5px;top:689.3px;" width="20.5" height="20.5" viewBox="0 0 20.5 20.5"><defs><linearGradient id="wg" x1="0" y1="0" x2="1" y2="1"><stop offset="0" stop-color="#4fc3f7"/><stop offset="1" stop-color="#0a73d9"/></linearGradient></defs><rect x="0" y="0" width="9.8" height="9.8" fill="url(#wg)"/><rect x="10.7" y="0" width="9.8" height="9.8" fill="url(#wg)"/><rect x="0" y="10.7" width="9.8" height="9.8" fill="url(#wg)"/><rect x="10.7" y="10.7" width="9.8" height="9.8" fill="url(#wg)"/></svg>
<div class="a" style="left:490px;top:687px;width:81px;height:25px;background:#f0f3fa;border-radius:12.5px;box-shadow:0 0 0 1px rgba(200,208,220,.4)"></div>
<svg class="a" style="left:508px;top:694.5px;" width="12" height="12" viewBox="0 0 12 12"><circle cx="4.8" cy="4.8" r="3.9" stroke="#202124" stroke-width="1.4" fill="none"/><path d="M7.6 7.6 L11.3 11.3" stroke="#202124" stroke-width="1.5"/></svg>
<div class="a t" style="left:524.00px;top:695.03px;font-size:10.6px;line-height:10.6px;color:#202124;font-weight:400;letter-spacing:-0.150px;font-family:'Liberation Sans',sans-serif;transform:scaleX(0.9180);transform-origin:0 0;">Search</div>
<svg class="a" style="left:583px;top:690.5px;" width="21" height="18.5" viewBox="0 0 21 18.5"><rect x="7" y="0" width="14" height="13" fill="#f2f2f2" opacity=".9"/><rect x="4" y="3.5" width="12" height="11" fill="#c8c8c8"/><rect x="0" y="6" width="15" height="12.5" fill="#1d1d1d"/><rect x="3.5" y="6" width="11.5" height="9" fill="#c9c9c4"/></svg>
<svg class="a" style="left:619.5px;top:689px;" width="21" height="21" viewBox="0 0 21 21"><defs><linearGradient id="eg" x1="0" y1="0" x2="1" y2="1"><stop offset="0" stop-color="#35c1f1"/><stop offset=".5" stop-color="#1473d3"/><stop offset="1" stop-color="#0c59a4"/></linearGradient></defs><circle cx="10.5" cy="10.5" r="10.3" fill="url(#eg)"/><path d="M20.5 9 C19.5 3 14 0 9 0.5 C14 1.5 17 5 16.5 9 Z" fill="#5ad36a"/><path d="M6 11.5 C6 7.5 9 6 11.5 6 C14.5 6 16.5 8 16.5 10.5 H6.5 C6.7 13.5 9.5 16 14 15 C12 17.5 6 17 6 11.5 Z" fill="#fff"/><path d="M16.5 10.5 H9 C9 8.5 10 7.5 12 7.5 C14.5 7.5 16.5 9 16.5 10.5 Z" fill="#7fd17a"/></svg>
<svg class="a" style="left:656.5px;top:691px;" width="20" height="16.5" viewBox="0 0 20 16.5"><rect x="0" y="0" width="20" height="16.5" rx="1" fill="#1f78c7"/><rect x="1.5" y="1.5" width="17" height="12.5" fill="#aee2f7"/><circle cx="7" cy="7" r="3.6" fill="#f39a1c"/><path d="M7 7 V3.4 A3.6 3.6 0 0 1 10.6 7 Z" fill="#2b6cc4"/><path d="M12 4.5 H17 M12 7.5 H17 M12 10.5 H16" stroke="#1f78c7" stroke-width="1.2"/><rect x="2" y="14.5" width="16" height="1.3" fill="#7ec8f0"/></svg>
<svg class="a" style="left:693px;top:691px;" width="20.5" height="18" viewBox="0 0 20.5 18"><path d="M0 2 A1.5 1.5 0 0 1 1.5 0.5 H7.5 L9.5 2.5 H19 A1.5 1.5 0 0 1 20.5 4 V16.5 A1.5 1.5 0 0 1 19 18 H1.5 A1.5 1.5 0 0 1 0 16.5 Z" fill="#f4b72a"/><path d="M0 5 H20.5 V16.5 A1.5 1.5 0 0 1 19 18 H1.5 A1.5 1.5 0 0 1 0 16.5 Z" fill="#ffd55a"/><rect x="2.8" y="13" width="15" height="5" fill="#1a65c4"/></svg>
<svg class="a" style="left:731.5px;top:690px;" width="16.5" height="18" viewBox="0 0 16.5 18"><rect x="0" y="0" width="16.5" height="18" rx="1.2" fill="#8ea5c2"/><rect x="1.3" y="2.5" width="14" height="14" fill="#f5f7fa"/><path d="M4 6 L7 12 L9 7 L11 9" stroke="#e67e22" stroke-width="1.4" fill="none"/><rect x="9" y="4" width="5" height="4" fill="#c6d4e6"/></svg>
<svg class="a" style="left:769px;top:689.3px;" width="15" height="20.5" viewBox="0 0 15 20.5"><rect x="0" y="2" width="15" height="16.5" rx="1" fill="#3aa3dc"/><rect x="0" y="17" width="15" height="2.2" fill="#b8703a"/><path d="M3 6.5 H12 M3 9.5 H12 M3 12.5 H12" stroke="#1c5f9a" stroke-width="1.3"/><path d="M2.5 0 V3.5 M5.5 0 V3.5 M8.5 0 V3.5 M11.5 0 V3.5" stroke="#1d3a55" stroke-width="1.3"/></svg>
<div class="a" style="left:775px;top:714px;width:5px;height:2px;background:#8a8f98;border-radius:1px"></div>
<div class="a" style="left:798px;top:685.5px;width:30.5px;height:32.5px;background:#eef2fa;border-radius:4px"></div>
<svg class="a" style="left:802.5px;top:689.3px;" width="22" height="22" viewBox="0 0 22 22"><circle cx="11" cy="11" r="10.8" fill="#db4437"/><path d="M11 11 L20.35 5.6 A10.8 10.8 0 0 1 11 21.8 Z" fill="#fbc02d"/><path d="M11 11 L11 21.8 A10.8 10.8 0 0 1 1.65 5.6 Z" fill="#0f9d58"/><path d="M11 11 L1.65 5.6 A10.8 10.8 0 0 1 20.35 5.6 Z" fill="#db4437"/><circle cx="11" cy="11" r="5" fill="#fff"/><circle cx="11" cy="11" r="3.9" fill="#4285f4"/></svg>
<div class="a" style="left:806.5px;top:713.5px;width:13.5px;height:2.5px;background:#2f74d0;border-radius:1.5px"></div>
<svg class="a" style="left:1114px;top:697px;" width="11" height="6" viewBox="0 0 11 6"><path d="M0.6 5.5 L5.5 0.8 L10.4 5.5" stroke="#202124" stroke-width="1.2" fill="none"/></svg>
<svg class="a" style="left:1136px;top:695px;" width="13.5" height="9" viewBox="0 0 13.5 9"><path d="M0.6 3.2 A9.5 9.5 0 0 1 12.9 3.2 M2.6 5.3 A6.6 6.6 0 0 1 10.9 5.3 M4.6 7.3 A3.6 3.6 0 0 1 8.9 7.3" stroke="#202124" stroke-width="1.1" fill="none"/><circle cx="6.75" cy="8.3" r="0.9" fill="#202124"/></svg>
<svg class="a" style="left:1155.5px;top:695px;" width="13" height="9" viewBox="0 0 13 9"><path d="M0.6 3 H3 L6 0.6 V8.4 L3 6 H0.6 Z" stroke="#202124" stroke-width="1" fill="none" stroke-linejoin="round"/><path d="M8.5 2.5 L12 6 M12 2.5 L8.5 6" stroke="#202124" stroke-width="1"/></svg>
<svg class="a" style="left:1176px;top:696.4px;" width="13.5" height="7.5" viewBox="0 0 13.5 7.5"><rect x="0.5" y="0.5" width="11" height="6.5" rx="1.2" stroke="#202124" stroke-width="1" fill="none"/><rect x="2" y="2" width="4.2" height="3.5" fill="#202124"/><rect x="12" y="2.5" width="1.3" height="2.5" fill="#202124"/></svg>
<div class="a t" style="left:1211.20px;top:687.77px;font-size:10.2px;line-height:10.2px;color:#202124;font-weight:400;letter-spacing:-0.150px;font-family:'Liberation Sans',sans-serif;transform:scaleX(0.8942);transform-origin:0 0;">1:51 PM</div>
<div class="a t" style="left:1204.20px;top:701.17px;font-size:10.2px;line-height:10.2px;color:#202124;font-weight:400;letter-spacing:0.043px;font-family:'Liberation Sans',sans-serif;">3/4/2023</div>
<svg class="a" style="left:1252px;top:694.3px;" width="11.5" height="12" viewBox="0 0 11.5 12"><path d="M5.75 0.8 A3.8 3.8 0 0 0 1.9 4.6 V7.8 L0.5 9.5 H11 L9.6 7.8 V4.6 A3.8 3.8 0 0 0 5.75 0.8 Z" fill="#202124"/><circle cx="5.75" cy="10.8" r="1.2" fill="#202124"/><text x="5.9" y="7.3" font-size="5" fill="#fff" font-family="Liberation Sans" text-anchor="middle">z</text></svg>
</body></html>
